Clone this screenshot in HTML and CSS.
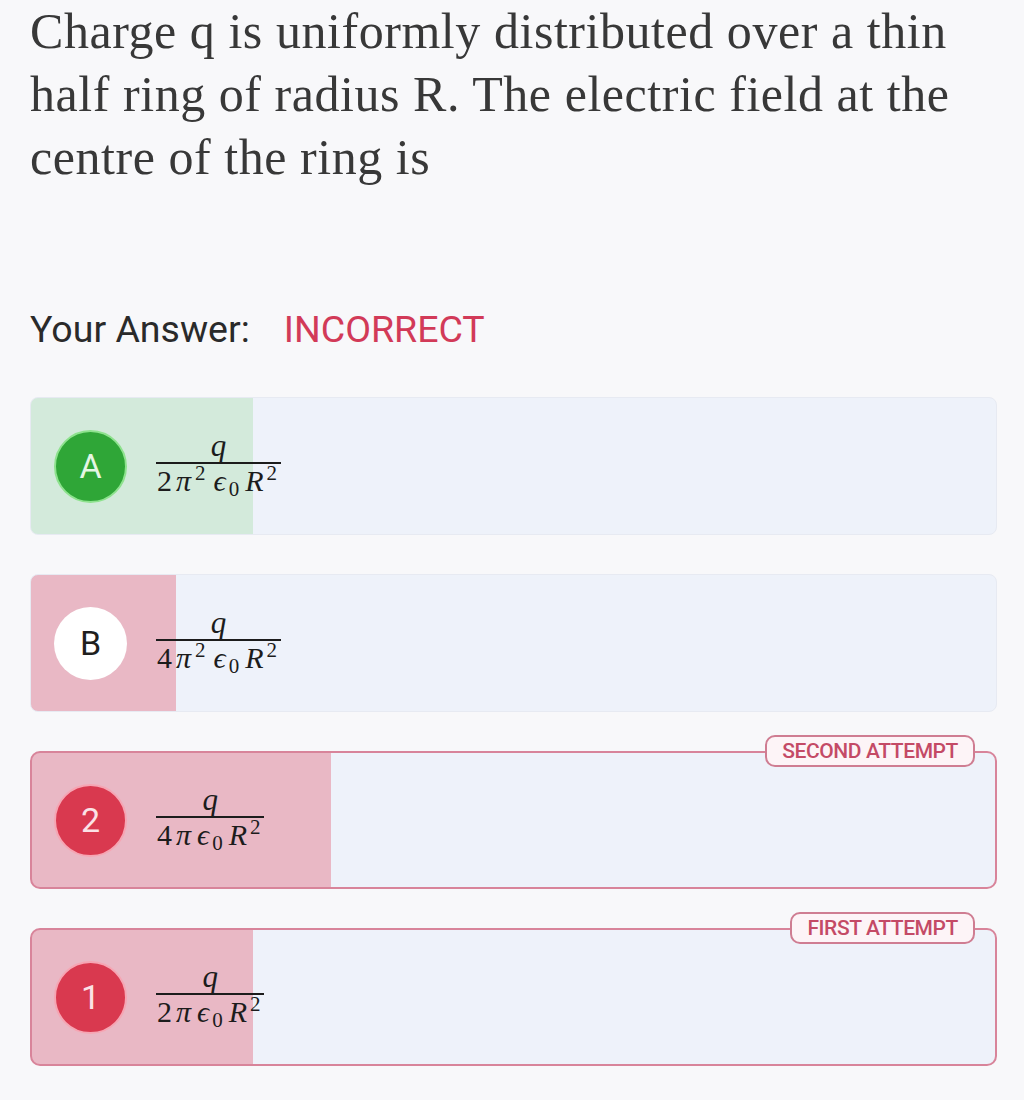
FILE: index.html
```html
<!DOCTYPE html>
<html>
<head>
<meta charset="utf-8">
<link rel="stylesheet" href="styles.css">
</head>
<body>
<main class="page">
  <p class="question">Charge q is uniformly distributed over a thin half ring of radius R. The electric field at the centre of the ring is</p>

  <div class="result">
    <span class="result-label">Your Answer:</span>
    <span class="result-value">INCORRECT</span>
  </div>

  <ul class="options">
    <li class="option option-correct" style="--fill: 23%">
      <span class="bubble bubble-green">A</span>
      <span class="frac">
        <span class="num"><i>q</i></span>
        <span class="den">2<i>π</i><sup>2</sup><i>ϵ</i><sub>0</sub><i>R</i><sup>2</sup></span>
      </span>
    </li>

    <li class="option option-wrong" style="--fill: 15%">
      <span class="bubble bubble-white">B</span>
      <span class="frac">
        <span class="num"><i>q</i></span>
        <span class="den">4<i>π</i><sup>2</sup><i>ϵ</i><sub>0</sub><i>R</i><sup>2</sup></span>
      </span>
    </li>

    <li class="option option-wrong option-attempt" style="--fill: 31%">
      <span class="badge">SECOND ATTEMPT</span>
      <span class="bubble bubble-red">2</span>
      <span class="frac">
        <span class="num"><i>q</i></span>
        <span class="den">4<i>π</i><i>ϵ</i><sub>0</sub><i>R</i><sup>2</sup></span>
      </span>
    </li>

    <li class="option option-wrong option-attempt" style="--fill: 23%">
      <span class="badge">FIRST ATTEMPT</span>
      <span class="bubble bubble-red">1</span>
      <span class="frac">
        <span class="num"><i>q</i></span>
        <span class="den">2<i>π</i><i>ϵ</i><sub>0</sub><i>R</i><sup>2</sup></span>
      </span>
    </li>
  </ul>
</main>
</body>
</html>
```

FILE: styles.css
```css
* { box-sizing: border-box; }

html, body {
  margin: 0;
  padding: 0;
  background: #f8f8fa;
}

.page {
  padding: 0 27px 0 30px;
}

.question {
  margin: 0;
  font-family: "Liberation Serif", "DejaVu Serif", serif;
  font-size: 50px;
  line-height: 63px;
  color: #383838;
  letter-spacing: 0.55px;
}

.result {
  margin-top: 118px;
  display: flex;
  align-items: baseline;
  gap: 34px;
  font-family: Roboto, "Liberation Sans", sans-serif;
  font-size: 37.5px;
}

.result-label { color: #2a2a2a; }
.result-value { color: #d23a58; }

.options {
  list-style: none;
  margin: 46px 0 0;
  padding: 0;
  display: flex;
  flex-direction: column;
  gap: 39px;
}

.option {
  position: relative;
  height: 138px;
  border-radius: 8px;
  border: 1px solid #e7eaf2;
  display: flex;
  align-items: center;
  padding-left: 23px;
  gap: 29px;
  background: linear-gradient(to right, var(--fill-color) var(--fill), #eef2fa var(--fill));
}

.option-correct { --fill-color: #d3eadb; }
.option-wrong { --fill-color: #e9b8c5; }

.option-attempt {
  border: 2px solid #d8849a;
  border-radius: 10px;
  padding-left: 22px;
}

.bubble {
  flex: none;
  width: 73px;
  height: 73px;
  border-radius: 50%;
  display: flex;
  align-items: center;
  justify-content: center;
  font-family: Roboto, "Liberation Sans", sans-serif;
  font-size: 34px;
}

.bubble-green {
  background: #2fa637;
  border: 2px solid #8ee28e;
  color: #e4f6e4;
}

.bubble-white {
  background: #ffffff;
  color: #1f1f1f;
}

.bubble-red {
  background: #d9394f;
  border: 2px solid #f6a5b3;
  color: #fbe2e6;
}

.frac {
  display: inline-flex;
  flex-direction: column;
  align-items: center;
  font-family: "Liberation Serif", "DejaVu Serif", serif;
  font-size: 30px;
  color: #1c1c1c;
  margin-top: -2px;
}

.frac i {
  font-style: italic;
}

.num {
  line-height: 26px;
  padding: 0 4px 3px;
  font-size: 31px;
}

.den {
  border-top: 2px solid #1c1c1c;
  line-height: 34px;
  padding: 0 4px 0 1px;
}

.den i { padding: 0 2px 0 3px; }
.den i:first-of-type { padding: 0 3px 0 4px; }

.den sup {
  font-size: 21px;
  vertical-align: 11px;
  line-height: 0;
  margin: 0 5px 0 1px;
}

.den sup:last-child { margin-right: 0; }

.den sub {
  font-size: 21px;
  vertical-align: -5px;
  line-height: 0;
  margin: 0 3px 0 1px;
}

.badge {
  position: absolute;
  right: 20px;
  top: -18px;
  height: 32px;
  padding: 0 15px;
  display: flex;
  align-items: center;
  border: 2px solid #cf7d92;
  border-radius: 10px;
  background: #fdf4f7;
  color: #c44a66;
  font-family: Roboto, "Liberation Sans", sans-serif;
  font-size: 21px;
  font-weight: 500;
  letter-spacing: -0.4px;
}
```
